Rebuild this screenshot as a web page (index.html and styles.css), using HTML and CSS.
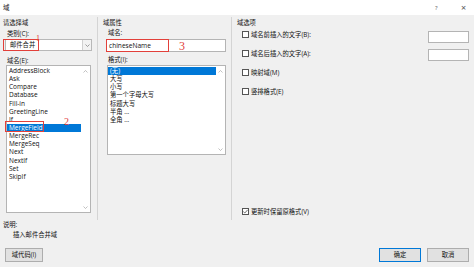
FILE: index.html
```html
<!DOCTYPE html>
<html lang="zh-CN">
<head>
<meta charset="utf-8">
<title>域</title>
<link rel="stylesheet" href="styles.css">
</head>
<body>
<div class="dialog">
  <div class="titlebar">
    <span class="title">域</span>
    <span class="help">?</span>
    <span class="close">×</span>
  </div>

  <div class="panels">
    <section class="panel left">
      <div class="group-title">请选择域</div>
      <div class="label cat-label">类别(C):</div>
      <div class="combo">
        <span class="combo-text">邮件合并</span>
        <span class="combo-btn">
          <svg width="5" height="3" viewBox="0 0 5 3"><polyline points="0.5,0.5 2.5,2.5 4.5,0.5" fill="none" stroke="#777" stroke-width="0.7"/></svg>
        </span>
        <span class="mark mark-box mark1"></span>
        <span class="num num1">1</span>
      </div>
      <div class="label name-label">域名(E):</div>
      <div class="listbox names">
        <ul class="items">
          <li>AddressBlock</li>
          <li>Ask</li>
          <li>Compare</li>
          <li>Database</li>
          <li>Fill-in</li>
          <li>GreetingLine</li>
          <li>If</li>
          <li class="sel">MergeField</li>
          <li>MergeRec</li>
          <li>MergeSeq</li>
          <li>Next</li>
          <li>NextIf</li>
          <li>Set</li>
          <li>SkipIf</li>
        </ul>
        <div class="vscroll">
          <svg width="5" height="3" viewBox="0 0 5 3"><polyline points="0.5,2.5 2.5,0.5 4.5,2.5" fill="none" stroke="#999" stroke-width="0.6"/></svg>
          <svg width="5" height="3" viewBox="0 0 5 3"><polyline points="0.5,0.5 2.5,2.5 4.5,0.5" fill="none" stroke="#999" stroke-width="0.6"/></svg>
        </div>
        <span class="mark mark2"></span>
        <span class="num num2">2</span>
      </div>
    </section>

    <section class="panel mid">
      <div class="group-title">域属性</div>
      <div class="label fname-label">域名:</div>
      <div class="textbox fname">
        <span class="latin">chineseName</span>
        <span class="mark mark3"></span>
        <span class="num num3">3</span>
      </div>
      <div class="label fmt-label">格式(I):</div>
      <div class="listbox formats">
        <ul class="items">
          <li class="sel">(无)</li>
          <li>大写</li>
          <li>小写</li>
          <li>第一个字母大写</li>
          <li>标题大写</li>
          <li>半角 ...</li>
          <li>全角 ...</li>
        </ul>
        <div class="vscroll">
          <svg width="5" height="3" viewBox="0 0 5 3"><polyline points="0.5,2.5 2.5,0.5 4.5,2.5" fill="none" stroke="#999" stroke-width="0.6"/></svg>
          <svg width="5" height="3" viewBox="0 0 5 3"><polyline points="0.5,0.5 2.5,2.5 4.5,0.5" fill="none" stroke="#999" stroke-width="0.6"/></svg>
        </div>
      </div>
    </section>

    <section class="panel right">
      <div class="group-title">域选项</div>
      <div class="opt opt1">
        <span class="check"></span>
        <span class="opt-label">域名前插入的文字(B):</span>
        <span class="opt-input"></span>
      </div>
      <div class="opt opt2">
        <span class="check"></span>
        <span class="opt-label">域名后插入的文字(A):</span>
        <span class="opt-input"></span>
      </div>
      <div class="opt opt3">
        <span class="check"></span>
        <span class="opt-label">映射域(M)</span>
      </div>
      <div class="opt opt4">
        <span class="check"></span>
        <span class="opt-label">竖排格式(E)</span>
      </div>
      <div class="opt opt-keep">
        <span class="check checked">
          <svg width="7" height="7" viewBox="0 0 7 7"><polyline points="1.3,3.6 2.8,5 5.7,1.8" fill="none" stroke="#333" stroke-width="0.7"/></svg>
        </span>
        <span class="opt-label">更新时保留原格式(V)</span>
      </div>
    </section>
  </div>

  <div class="footer">
    <div class="desc">
      <div class="desc-title">说明:</div>
      <div class="desc-text">插入邮件合并域</div>
      <button class="btn code-btn">域代码(I)</button>
    </div>
    <div class="actions">
      <button class="btn ok">确定</button>
      <button class="btn">取消</button>
    </div>
  </div>
</div>
</body>
</html>
```

FILE: styles.css
```css
* { box-sizing: border-box; margin: 0; padding: 0; }
html, body { width: 474px; height: 267px; overflow: hidden; }
body {
  background: #f0f0f0;
  font-family: "Open Sans", "Noto Sans CJK SC", sans-serif;
  font-size: 6.3px;
  line-height: 8px;
  color: #111;
}
ul { list-style: none; }

.titlebar {
  height: 15px;
  background: #fff;
  display: flex;
  align-items: center;
  padding-left: 3px;
}
.title { flex: 1; font-size: 6.5px; }
.help { width: 6px; margin-right: 20px; color: #555; font-size: 6px; }
.close { width: 8px; margin-right: 5px; color: #555; font-size: 9px; }

.panels { display: flex; height: 203px; margin-top: 2px; }
.panel { display: flex; flex-direction: column; }
.group-title { height: 8px; }
.label { height: 8px; }

/* left */
.left { width: 98px; border-right: 1px solid #d4d4d4; padding: 2px 0 0 3px; }
.cat-label { margin: 3px 0 0 4px; }
.combo {
  position: relative;
  margin: 1px 0 0 2px;
  width: 87px;
  height: 12px;
  background: #fff;
  border: 1px solid #b8b8b8;
  display: flex;
  align-items: center;
}
.combo-text { flex: 1; padding-left: 4px; }
.combo-btn {
  width: 9px;
  height: 10px;
  border-left: 1px solid #d0d0d0;
  background: #f2f2f2;
  display: flex;
  align-items: center;
  justify-content: center;
}
.name-label { margin: 6px 0 0 4px; }

.listbox {
  position: relative;
  background: #fff;
  border: 1px solid #b4b4b4;
  display: flex;
}
.names { margin-left: 3px; width: 85px; height: 148px; }
.names .items li { font-size: 6.5px; }
.latin { font-size: 6.6px; }
.items { flex: 1; padding-top: 1px; }
.items li { height: 8.15px; line-height: 8.15px; padding-left: 2px; white-space: nowrap; }
.items li.sel { background: #0078d7; color: #fff; }
.vscroll {
  width: 9px;
  display: flex;
  flex-direction: column;
  justify-content: space-between;
  align-items: center;
  padding: 4px 0 3px;
}

/* middle */
.mid { width: 134px; border-right: 1px solid #d4d4d4; padding: 2px 0 0 5px; }
.fname-label { margin: 2px 0 0 5px; }
.textbox {
  position: relative;
  background: #fff;
  border: 1px solid #b4b4b4;
  display: flex;
  align-items: center;
}
.fname { margin: 2px 0 0 3px; width: 120px; height: 13px; padding-left: 2px; }
.fmt-label { margin: 4px 0 0 5px; }
.formats { margin: 1px 0 0 4px; width: 119px; height: 90px; }

/* right */
.right { flex: 1; padding: 2px 0 5px 5px; }
.opt { display: flex; align-items: flex-start; padding-left: 5px; }
.check {
  width: 7px;
  height: 7px;
  background: #fff;
  border: 1px solid #555;
  flex: none;
  display: flex;
}
.check svg { margin: -1px; }
.opt-label { margin-left: 2px; line-height: 7px; }
.opt-input {
  margin-left: auto;
  margin-right: 5px;
  width: 41px;
  height: 12px;
  background: #fff;
  border: 1px solid #b4b4b4;
}
.opt1 { margin-top: 4px; height: 12px; }
.opt2 { margin-top: 6px; height: 13px; }
.opt2 .check, .opt2 .opt-label { margin-top: 1px; }
.opt3 { margin-top: 7px; }
.opt4 { margin-top: 12px; }
.opt-keep { margin-top: auto; }

/* footer */
.footer {
  height: 47px;
  display: flex;
  justify-content: space-between;
  align-items: flex-end;
  padding: 0 5px 5px 3px;
}
.desc { align-self: stretch; display: flex; flex-direction: column; padding-top: 1px; }
.desc-text { margin: 2px 0 0 10px; }
.btn {
  font: inherit;
  height: 14px;
  width: 42px;
  background: #e1e1e1;
  border: 1px solid #adadad;
  color: #111;
}
.code-btn { margin: 9px 0 0 2px; width: 38px; }
.actions { display: flex; gap: 6px; }
.btn.ok { border-color: #0078d7; }

/* red annotations (overlays) */
.mark { position: absolute; border: 1px solid #e2403a; pointer-events: none; }
.num {
  position: absolute;
  color: #e2403a;
  font-family: "Liberation Serif", serif;
  line-height: 1;
}
.mark1 { left: -3px; top: -1px; width: 36px; height: 12px; }
.num1 { left: 30px; top: -5px; font-size: 8px; }
.mark2 { left: -2px; top: 55px; width: 39px; height: 11px; }
.num2 { left: 57px; top: 51px; font-size: 10px; }
.mark3 { left: -1px; top: -1px; width: 63px; height: 13px; }
.num3 { left: 72px; top: 0px; font-size: 12px; }
```
